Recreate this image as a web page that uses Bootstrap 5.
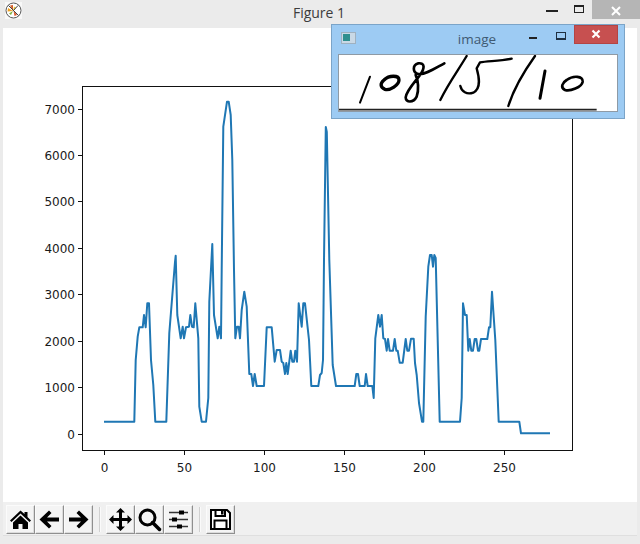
<!DOCTYPE html>
<html lang="en">
<head>
<meta charset="utf-8">
<title>Figure 1</title>
<link href="https://cdn.jsdelivr.net/npm/bootstrap@5.3.0/dist/css/bootstrap.min.css" rel="stylesheet">
<style>
html,body{margin:0;padding:0;width:640px;height:544px;overflow:hidden;background:#ebebeb}
body{font-family:"Liberation Sans",Arial,sans-serif}
.fig-win{width:640px;height:544px;position:relative;background:#ebebeb}
.fig-title{height:28px;padding-left:5px;padding-bottom:7px;color:#3c3c3c;font:14px "Open Sans","Liberation Sans",sans-serif}
.fig-title-text{position:absolute;left:0;right:2px;top:5px;text-align:center;line-height:16px}
.ctl-min{position:absolute;left:546px;top:10px;width:12px;height:2px;background:#222}
.ctl-max{position:absolute;left:574px;top:5px;width:10px;height:8px;border:1px solid #222;border-top-width:2px}
.ctl-close{position:absolute;left:592px;top:0;width:48px;height:19px;background:#b5b5b5}
.fig-canvas{display:block;margin-left:3px;width:634px;height:474px;background:#fff}
.fig-canvas text{font:12px "DejaVu Sans",sans-serif;fill:#1a1a1a}
.fig-tools{height:34px;margin:0 3px;padding:3px 0 0 3px;background:#f0f0f0;border-bottom:1px solid #dfdfdf}
.tool-btn{--bs-btn-padding-x:0;--bs-btn-padding-y:0;width:29px;height:29px;padding:0;border-radius:0;border:1px solid;border-color:#fbfbfb #8f8f8f #8f8f8f #fbfbfb;background:#f4f4f4;box-shadow:inset -1px -1px 0 #dcdcdc;display:flex;align-items:center;justify-content:center}
.tool-sep{width:2px;height:25px;background:#d0d0d0;border-right:1px solid #fafafa;margin:2px 5px 0 6px}
.img-win{position:absolute;left:331px;top:24px;width:294px;height:95px;background:#9dcbf3;border:1px solid #7ba4c8;color:#3f5a72;font:13.5px "Open Sans","Liberation Sans",sans-serif}
.img-head{height:29px;position:relative}
.img-title{position:absolute;left:0;width:290px;top:6px;text-align:center;line-height:16px}
.img-icon{position:absolute;left:9px;top:7px;width:15px;height:12px;background:#c9d9e6;border:1px solid #9fb1c0}
.img-icon-in{display:block;width:7px;height:7px;margin:1px 0 0 1px;background:#2f8f8f}
.img-min{position:absolute;left:197px;top:12px;width:8px;height:2px;background:#222}
.img-max{position:absolute;left:224px;top:7px;width:10px;height:8px;border:1px solid #1f2f40;border-bottom-width:2px}
.img-close{position:absolute;left:242px;top:0;width:44px;height:19px;background:#c75050;border:1px solid #b34444;color:#fff}
.img-pane{display:block;margin-left:6px;width:280px;height:58px;background:#fff;border:1px solid #8e9aa5}
</style>
</head>
<body>
<div class="fig-win d-flex flex-column">
  <div class="fig-title d-flex align-items-center flex-shrink-0">
    <svg width="17" height="17" viewBox="0 0 17 17">
      <rect width="17" height="17" fill="#f8f8f8"/>
      <circle cx="8.5" cy="8.5" r="7.5" fill="#fff" stroke="#555" stroke-width="1"/>
      <path d="M8 9 3 6 2.5 9.5Z" fill="#f0a020"/>
      <path d="M8 9 5 3.5 8 3Z" fill="#d4602a"/>
      <path d="M8.5 8.5 12 13 9.5 14Z" fill="#d9582a"/>
      <path d="M8 9 6 13 4 11.5Z" fill="#7fb23c"/>
      <path d="M8 9 11 5.5 9 4.5Z" fill="#e8c23a"/>
      <path d="M3.5 3.5 13.5 13.5M13 3.5 8.5 8.5" stroke="#444" stroke-width="1"/>
    </svg>
    <span class="fig-title-text">Figure 1</span>
    <span class="ctl-min"></span><span class="ctl-max"></span>
    <span class="ctl-close">
      <svg width="48" height="19" viewBox="0 0 48 19"><path d="M20 5 28 13M28 5 20 13" stroke="#fff" stroke-width="2"/></svg>
    </span>
  </div>
  <svg class="fig-canvas flex-shrink-0" viewBox="3 28 634 474">
    <polyline fill="none" stroke="#1f77b4" stroke-width="2" stroke-linejoin="round" points="104,421.7 134.3,421.7 135.7,360 137.7,336.7 139.3,327.3 142.7,327.3 144,315 145.7,327.3 147.3,303.3 149,303.3 151,360 153.3,385 155.3,421.7 166.3,421.7 169.3,333 175,262 175.7,255.7 177.3,315 180.7,338.3 182.7,326.7 184,338.3 186,327.3 189,326.7 190.3,315 192,326.7 193.7,327.3 195.3,303.3 198.3,338.3 199.3,406.7 201.7,421.7 206,421.7 208.3,398 209.3,301.7 212.3,244 214,315 217.7,338.3 219.3,326.7 221,338.3 221.7,270 223.3,126.7 227,101.7 228.7,101.7 230.7,115 232.3,160 234,270 235.3,338.3 237,326.7 238.7,326.7 240,338.3 241.7,310 244.3,291.7 246.7,306.7 249.3,374 251.3,374 253,386 254.7,374 256.7,386 264,386 266.7,327.3 271.7,327.3 274.7,361.7 276.7,350 280,350 281.7,361.7 283.3,363 285,374 286.3,363 287.7,374 290.7,350.7 292.3,361.7 294,361.7 295.3,350.7 297,361.7 298.7,303.3 301.7,326.7 303.3,303.3 305,303.3 309,340 311.3,386 318.3,386 320,375 321.7,373 323,360 324,260 325.8,127 326.8,132 329.3,260 332.7,365 336,386 354.7,386 356.3,374 358,374 359.7,386 364.7,386 366,374 367.7,386 372.3,386 373.7,398 375.3,338.3 378.3,315 380,326.7 381.7,315 383.3,338.3 385,339 386.7,350.7 388,339 389.7,350.7 393,350.7 394.7,339 396.3,350.7 397.7,350.7 399.7,362.7 402.7,362.7 405.7,339 407.3,350.7 409,350.7 411,338.7 413.7,338.7 415,363 416.7,375 419,403 422,421.7 423.3,421.7 425.7,316.7 428.3,266.7 430,255 431.7,255 433,266.7 434.3,255 435.7,258 439.7,421.7 460,421.7 461.7,398 463,303.3 465,315 466.7,315 468.3,350.7 469.7,339 471.3,350.7 473,350.7 474.7,339 476.3,339 478,350.7 479.3,350.7 481,339 487.3,339 489,327.3 490.3,327.3 492,291.7 495.3,340 498.7,421.7 519.3,421.7 521,433.3 550,433.3"/>
    <rect x="82.5" y="86.5" width="490" height="364" fill="none" stroke="#111" stroke-width="1"/>
    <path d="M104.5 451V455M184.5 451V455M264.5 451V455M344.5 451V455M424.5 451V455M504.5 451V455M78 434.5H82M78 387.5H82M78 341.5H82M78 294.5H82M78 248.5H82M78 201.5H82M78 155.5H82M78 109.5H82" stroke="#111" stroke-width="1"/>
    <g text-anchor="middle">
      <text x="104.5" y="472">0</text><text x="184.5" y="472">50</text><text x="264.5" y="472">100</text><text x="344.5" y="472">150</text><text x="424.5" y="472">200</text><text x="504.5" y="472">250</text>
    </g>
    <g text-anchor="end">
      <text x="75" y="438.5">0</text><text x="75" y="392">1000</text><text x="75" y="345.5">2000</text><text x="75" y="299">3000</text><text x="75" y="252.5">4000</text><text x="75" y="206">5000</text><text x="75" y="160">6000</text><text x="75" y="113.5">7000</text>
    </g>
  </svg>
  <div class="fig-tools d-flex flex-shrink-0">
    <button class="btn tool-btn" type="button" aria-label="Home"><svg width="23" height="21" viewBox="0 0 23 21"><path d="M11.5 1.5 1 11.5l1.5 1.5 9-8.5 9 8.500 1.500-1.500-3.500-3.500V3h-3v2z" fill="#000"/><path d="M4 13.500 11.500 6.500 19 13.500V20h-5.500v-5h-4v5H4z" fill="#000"/></svg></button>
    <button class="btn tool-btn" type="button" aria-label="Back"><svg width="23" height="21" viewBox="0 0 23 21"><path d="M1.500 10.500 11 1.500l2.500 2.500-4.500 4.500h12v4h-12l4.500 4.500L11 19.500z" fill="#000"/></svg></button>
    <button class="btn tool-btn" type="button" aria-label="Forward"><svg width="23" height="21" viewBox="0 0 23 21"><path d="M21.500 10.500 12 1.500 9.500 4l4.500 4.500H2v4h12L9.500 17l2.500 2.500z" fill="#000"/></svg></button>
    <span class="tool-sep"></span>
    <button class="btn tool-btn" type="button" aria-label="Pan"><svg width="25" height="25" viewBox="0 0 25 25"><path d="M12.500 1 17 5.500h-3V11h5.500V8l4.500 4.500L19.500 17v-3H14v5.500h3L12.500 24 8 19.500h3V14H5.500v3L1 12.500 5.500 8v3H11V5.500H8z" fill="#000"/></svg></button>
    <button class="btn tool-btn" type="button" aria-label="Zoom"><svg width="25" height="25" viewBox="0 0 25 25"><circle cx="10.500" cy="10.500" r="7.500" fill="none" stroke="#000" stroke-width="3"/><path d="M15.500 15.500 22.500 22.500" stroke="#000" stroke-width="3.500" stroke-linecap="round"/></svg></button>
    <button class="btn tool-btn" type="button" aria-label="Configure"><svg width="23" height="23" viewBox="0 0 23 23"><path d="M2 4.500H21M2 11.500H21M2 18.500H21" stroke="#333" stroke-width="1.500"/><rect x="12" y="2.500" width="5" height="4" fill="#000"/><rect x="5" y="9.500" width="5" height="4" fill="#000"/><rect x="10" y="16.500" width="5" height="4" fill="#000"/></svg></button>
    <span class="tool-sep"></span>
    <button class="btn tool-btn" type="button" aria-label="Save"><svg width="23" height="23" viewBox="0 0 23 23"><path d="M2 2H18L21 5V21H2Z" fill="#fff" stroke="#000" stroke-width="2"/><path d="M6.500 2.500V8H16V2.500" fill="none" stroke="#000" stroke-width="2"/><rect x="12" y="3" width="2.500" height="3.500" fill="#000"/><path d="M5.500 20.500V12.500H17.500V20.500" fill="none" stroke="#000" stroke-width="2"/></svg></button>
  </div>

  <div class="img-win">
    <div class="img-head">
      <span class="img-icon"><span class="img-icon-in"></span></span>
      <span class="img-title">image</span>
      <span class="img-min"></span><span class="img-max"></span>
      <span class="img-close"><svg class="d-block mx-auto" width="42" height="17" viewBox="0 0 42 17"><path d="M17.500 4.500 24.500 11.500M24.500 4.500 17.500 11.500" stroke="#fff" stroke-width="2.200"/></svg></span>
    </div>
    <svg class="img-pane" viewBox="42 165 834 168" aria-hidden="true">
      <g fill="none" stroke="#000" stroke-linecap="round" stroke-linejoin="round">
        <path d="M135 230 105 308" stroke-width="6"/>
        <path d="M177 240C192 225 222 225 222 240 222 255 195 272 180 268 165 262 165 250 177 240Z" stroke-width="10"/>
        <path d="M358 190C330 205 300 225 280 222 262 218 262 195 280 190 300 188 300 205 285 225 275 240 245 270 242 292 242 308 265 310 275 290 282 270 280 240 272 225" stroke-width="8"/>
        <path d="M425 168C400 210 370 250 346 300" stroke-width="7"/>
        <path d="M560 176C530 183 490 183 465 187L455 205C462 230 470 265 445 278 425 285 410 275 406 258" stroke-width="7"/>
        <path d="M630 168C600 210 565 270 550 318" stroke-width="7"/>
        <path d="M660 213 645 295" stroke-width="9"/>
        <path d="M725 240C745 225 775 228 773 245 770 262 735 275 720 270 705 262 712 248 725 240Z" stroke-width="8"/>
        <path d="M42 329H815" stroke-width="5" stroke-linecap="butt" stroke="#222"/>
      </g>
    </svg>
  </div>
</div>
<script src="https://cdn.jsdelivr.net/npm/bootstrap@5.3.0/dist/js/bootstrap.bundle.min.js"></script>
</body>
</html>
